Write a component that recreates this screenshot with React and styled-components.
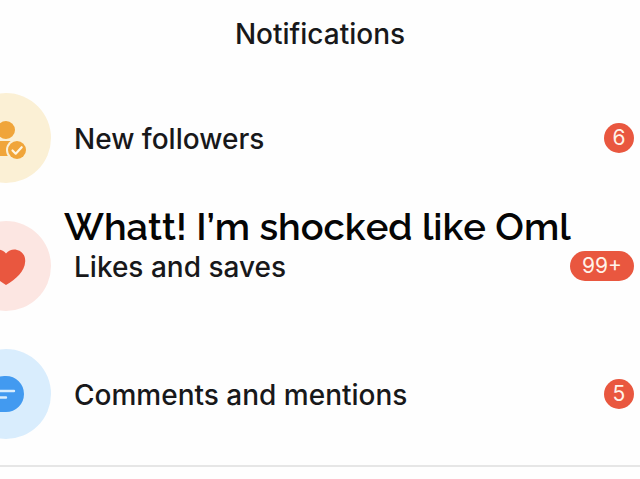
import React from "react"
import styled, { createGlobalStyle } from "styled-components"

const GlobalStyle = createGlobalStyle`
  * {
    box-sizing: border-box;
  }

  body {
    margin: 0;
    background-color: #fefefe;
    color: #18181a;
    font-family: Inter, "Liberation Sans", sans-serif;
    overflow: hidden;
  }
`

const Wrapper = styled.main`
  position: relative;
  overflow: hidden;
`

const Header = styled.header`
  padding: 17px 0 23px;
  text-align: center;
`

const Title = styled.h1`
  margin: 0;
  font-size: 28px;
  font-weight: 500;
  line-height: 34px;
`

const List = styled.ul`
  margin: 0;
  padding: 0 0 7px;
  list-style: none;
  border-bottom: 2px solid #e6e6e6;
`

const Row = styled.a`
  display: flex;
  align-items: center;
  gap: 23px;
  height: 128px;
  margin-left: -39px;
  padding-right: 6px;
  color: inherit;
  text-decoration: none;
`

const IconCircle = styled.span`
  flex: none;
  width: 90px;
  height: 90px;
  border-radius: 50%;
  background-color: ${({ $color }) => $color};

  & svg {
    display: block;
    width: 100%;
    height: 100%;
  }
`

const Label = styled.span`
  flex: 1;
  padding-top: 2px;
  font-size: 28px;
  font-weight: 500;
  line-height: 34px;
`

const Badge = styled.span`
  min-width: 30px;
  padding: 0 ${({ $wide }) => ($wide ? "12px" : "0")};
  border-radius: 15px;
  background-color: #e9573f;
  color: #fff3ea;
  font-size: 21px;
  line-height: 30px;
  text-align: center;
`

const Caption = styled.p`
  position: absolute;
  top: 204px;
  left: 64px;
  margin: 0;
  color: #050505;
  font-family: Raleway, Lato, sans-serif;
  font-size: 38px;
  font-weight: 600;
  font-kerning: none;
  line-height: 46px;
  white-space: nowrap;
`

const FollowerIcon = () => (
  <svg viewBox="0 0 90 90" aria-hidden="true">
    <circle cx="45" cy="37" r="9" fill="#f0a53a" />
    <path
      d="M28 63v-3c0-8 5-12 12-12h10c7 0 12 4 12 12v3z"
      fill="#f0a53a"
    />
    <circle cx="56" cy="57" r="11" fill="#fbf0d5" />
    <circle cx="56" cy="57" r="9" fill="#f0a53a" />
    <path
      d="M51.5 57.5l3.2 3.2 6-6.5"
      fill="none"
      stroke="#fff6e2"
      strokeWidth="2.2"
      strokeLinecap="round"
      strokeLinejoin="round"
    />
  </svg>
)

const HeartIcon = () => (
  <svg viewBox="0 0 90 90" aria-hidden="true">
    <path
      d="M45 32.5c3-3.5 7-4.5 11-3.6 5.5 1.2 8.500 6 8.200 11.600-.5 10-9 17.500-19.200 23.500-10.200-6-18.700-13.500-19.200-23.500-.3-5.600 2.700-10.400 8.200-11.600 4-.9 8 .1 11 3.600z"
      fill="#e9573f"
    />
  </svg>
)

const CommentIcon = () => (
  <svg viewBox="0 0 90 90" aria-hidden="true">
    <path
      d="M45 27a18 18 0 0 1 0 36H30c-2 0-2.5-1.5-1.5-3l1.5-3a18 18 0 0 1 15-30z"
      fill="#429af0"
    />
    <path
      d="M37 42h16M37 48.500h8"
      fill="none"
      stroke="#d8edfd"
      strokeWidth="2.4"
      strokeLinecap="round"
    />
  </svg>
)

const items = [
  { label: "New followers", count: "6", color: "#fbf0d5", Icon: FollowerIcon },
  { label: "Likes and saves", count: "99+", color: "#fce6e2", Icon: HeartIcon },
  {
    label: "Comments and mentions",
    count: "5",
    color: "#d9edfd",
    Icon: CommentIcon,
  },
]

const App = () => {
  return (
    <Wrapper>
      <GlobalStyle />
      <Header>
        <Title>Notifications</Title>
      </Header>
      <List>
        {items.map(({ label, count, color, Icon }) => (
          <li key={label}>
            <Row href="#">
              <IconCircle $color={color}>
                <Icon />
              </IconCircle>
              <Label>{label}</Label>
              <Badge $wide={count.length > 1}>{count}</Badge>
            </Row>
          </li>
        ))}
      </List>
      <Caption>Whatt! I’m shocked like Oml</Caption>
    </Wrapper>
  )
}

export default App
